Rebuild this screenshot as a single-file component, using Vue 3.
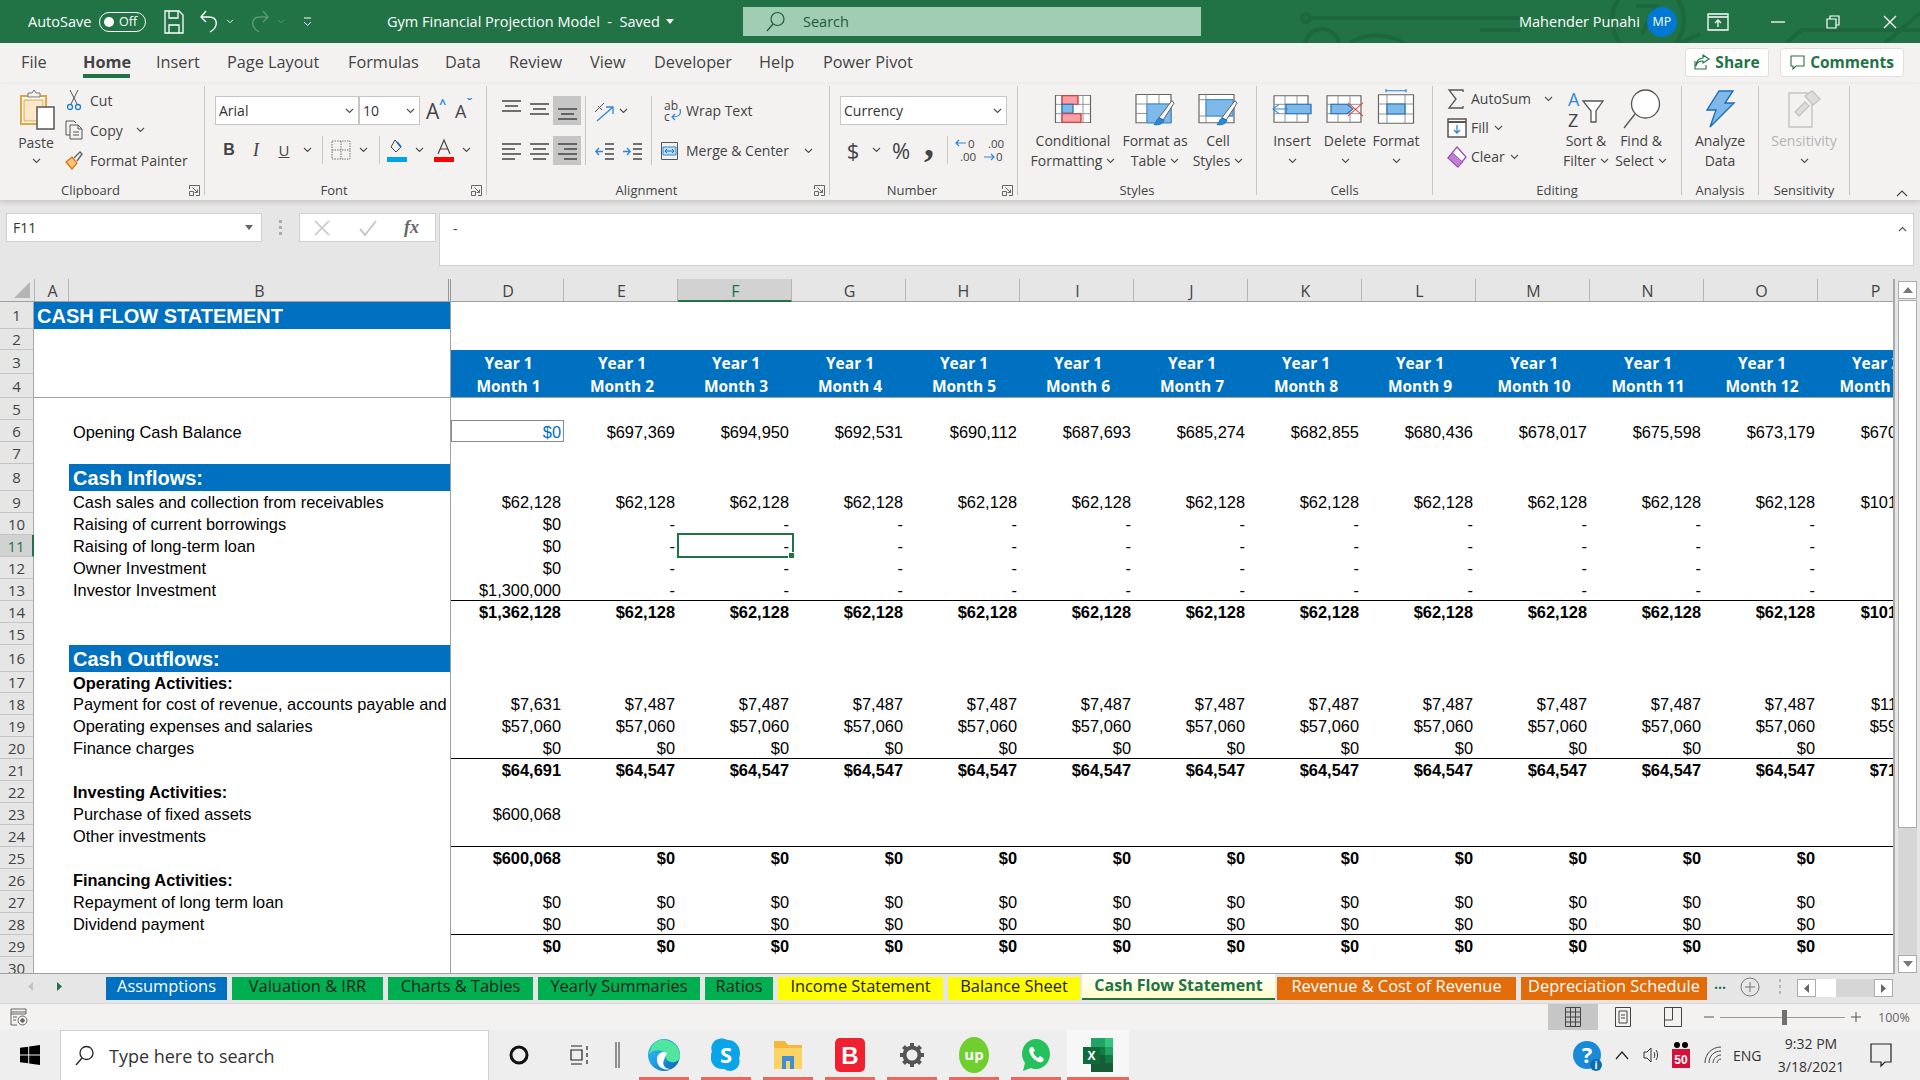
<template>
  <div class="app">
    <svg class="defs" width="0" height="0" aria-hidden="true">
      <symbol id="cv" viewBox="0 0 9 6"><path d="M1 1l3.500 3.500L8 1" fill="none" stroke="#505050" stroke-width="1.1"/></symbol>
      <symbol id="launch" viewBox="0 0 11 11"><path d="M.5 4V.5h10v10H7M.5 6.500v4h4v-4zM3.500 2.500l5 5M8.500 4.500v3h-3" fill="none" stroke="#666" stroke-width="1"/></symbol>
    </svg>

    <header class="titlebar">
      <svg class="circuit" viewBox="0 0 1920 43" width="1920" height="43" fill="none" stroke="#1c673d" stroke-width="4">
        <circle cx="1306" cy="18" r="4"/><path d="M1310 18h210"/><circle cx="1322" cy="46" r="17"/>
        <path d="M1350 43c20-14 50-6 58 4"/><circle cx="1648" cy="20" r="36"/><path d="M1636 6h20l-14 28"/>
        <path d="M1786 43l16-13h118M1885 43l35-30M1700 34l-20 9M1480 30h40"/>
      </svg>
      <span class="autosave">AutoSave</span>
      <span class="toggle"><i></i>Off</span>
      <svg class="t-save" width="20" height="26" viewBox="0 0 20 26" fill="none" stroke="#fff" stroke-width="1.300"><path d="M1 2h14l4 4v18H1zM5 2v7h9V2M5 24v-8h10v8"/></svg>
      <svg class="t-undo" width="18" height="26" viewBox="0 0 18 26" fill="none" stroke="#fff" stroke-width="1.400"><path d="M6 2L1 8l5 5M1 8h8c9 0 10 10 1 15"/></svg>
      <svg class="cvw t-c1" viewBox="0 0 9 6"><path d="M1 1l3.500 3.500L8 1" fill="none" stroke="#fff" stroke-width="1.100"/></svg>
      <svg class="t-redo" width="18" height="26" viewBox="0 0 18 26" fill="none" stroke="#5c9a78" stroke-width="1.400"><path d="M12 2l5 6-5 5M17 8H9C0 8-1 18 8 23"/></svg>
      <svg class="cvw t-c2" viewBox="0 0 9 6"><path d="M1 1l3.500 3.500L8 1" fill="none" stroke="#5c9a78" stroke-width="1.100"/></svg>
      <svg class="t-qat" width="9" height="10" viewBox="0 0 9 10" fill="none" stroke="#fff"><path d="M1 1h7M1 5l3.500 3.500L8 5"/></svg>
      <span class="doc">Gym Financial Projection Model &nbsp;-&nbsp; Saved</span>
      <svg class="t-doc" width="8" height="5" viewBox="0 0 8 5"><path d="M0 0h8L4 5z" fill="#fff"/></svg>
      <div class="search">
        <svg width="19" height="22" viewBox="0 0 19 22" fill="none" stroke="#1d5a38" stroke-width="1.200"><circle cx="11.500" cy="8" r="6.500"/><path d="M7 13L1 20"/></svg>
        <span>Search</span>
      </div>
      <span class="user">Mahender Punahi</span>
      <span class="avatar">MP</span>
      <svg class="t-disp" width="22" height="18" viewBox="0 0 22 18" fill="none" stroke="#fff" stroke-width="1.300"><path d="M1 1h20v16H1zM1 4h20M11 14V7M8 10l3-3 3 3"/></svg>
      <svg class="t-min" width="14" height="2" viewBox="0 0 14 2"><path d="M0 1h14" stroke="#fff" stroke-width="1.300"/></svg>
      <svg class="t-res" width="14" height="14" viewBox="0 0 14 14" fill="none" stroke="#fff" stroke-width="1.200"><path d="M1 4h9v9H1zM4 4V1h9v9h-3"/></svg>
      <svg class="t-close" width="14" height="14" viewBox="0 0 14 14" fill="none" stroke="#fff" stroke-width="1.300"><path d="M1 1l12 12M13 1L1 13"/></svg>
    </header>

    <nav class="tabs">
      <span v-for="t in ribbonTabs" :key="t" :class="{ on: t === 'Home' }">{{ t }}</span>
      <button class="pill share">
        <svg width="16" height="16" viewBox="0 0 16 16" fill="none" stroke="#217346" stroke-width="1.100"><path d="M1 7v8h11v-4M9 1l6 4-6 4V7C6 7 3 8 2 12c0-6 4-8 7-8z"/></svg>Share
      </button>
      <button class="pill comments">
        <svg width="15" height="15" viewBox="0 0 15 15" fill="none" stroke="#217346" stroke-width="1.100"><path d="M1 1h13v10H6l-3 3v-3H1z"/></svg>Comments
      </button>
    </nav>

    <section class="ribbon">
      <div class="grp g-clip">
        <div class="body clip">
          <div class="paste">
            <svg class="pasteico" width="36" height="42" viewBox="0 0 36 42" fill="none">
              <path d="M1 7h25v28H1z" fill="#fff" stroke="#e8a33d" stroke-width="2"/>
              <path d="M4 11h19v21H4z" fill="#fde9c9" stroke="#e8a33d"/>
              <path d="M8 8V4h4l2-3 2 3h4v4z" fill="#f3f2f1" stroke="#777"/>
              <path d="M17 18h17v22H17z" fill="#fff" stroke="#555" stroke-width="1.500"/>
            </svg>
            <span>Paste</span>
            <svg class="cv"><use href="#cv"/></svg>
          </div>
          <div class="clipcol">
            <div class="mini">
              <svg width="18" height="22" viewBox="0 0 18 22" fill="none"><path d="M5 1l7 14M13 1L6 15" stroke="#555"/><circle cx="5" cy="18" r="2.500" stroke="#1e7fc9" stroke-width="1.300"/><circle cx="13" cy="18" r="2.500" stroke="#1e7fc9" stroke-width="1.300"/></svg>
              <span>Cut</span>
            </div>
            <div class="mini">
              <svg width="18" height="20" viewBox="0 0 18 20" fill="none" stroke="#555"><path d="M5 15H1V1h8l2 2M5 5h8l4 4v10H5zM13 5v4h4M8 12h6M8 15h6"/></svg>
              <span>Copy</span>
              <svg class="cv copycv"><use href="#cv"/></svg>
            </div>
            <div class="mini">
              <svg width="18" height="20" viewBox="0 0 18 20" fill="none"><path d="M1 12l6-5 5 6-5 6z" fill="#f8c27a" stroke="#d9730d" stroke-width="1.200"/><path d="M9 8l6-6 2 2-5 7" stroke="#666" stroke-width="1.400"/></svg>
              <span>Format Painter</span>
            </div>
          </div>
        </div>
        <div class="lbl"><span>Clipboard</span><svg class="launch"><use href="#launch"/></svg></div>
      </div>
      <i class="sep"></i>

      <div class="grp g-font">
        <div class="body font">
          <div class="combos">
            <div class="combo c-font"><span>Arial</span><svg class="cv"><use href="#cv"/></svg></div>
            <div class="combo c-size"><span>10</span><svg class="cv"><use href="#cv"/></svg></div>
            <span class="grow"><b>A</b><sup>^</sup></span>
            <span class="shrink"><b>A</b><sup>ˇ</sup></span>
          </div>
          <div class="fontrow">
            <span class="fb">B</span><span class="fi">I</span><span class="fu">U</span>
            <svg class="cv"><use href="#cv"/></svg><i class="vsep"></i>
            <svg width="20" height="20" viewBox="0 0 20 20" fill="none" stroke="#777" stroke-dasharray="1.500 1"><path d="M1 1h18v18H1zM10 1v18M1 10h18"/></svg>
            <svg class="cv"><use href="#cv"/></svg><i class="vsep"></i>
            <svg width="20" height="24" viewBox="0 0 20 24" fill="none"><path d="M8 2l6 7-5 5-5-5z" stroke="#444"/><path d="M10 4l4 5" stroke="#1a6fb5" stroke-width="2"/><path d="M0 19h20v5H0z" fill="#00a2e8"/></svg>
            <svg class="cv"><use href="#cv"/></svg>
            <svg width="20" height="24" viewBox="0 0 20 24" fill="none"><path d="M4 16L10 2l6 14M6 11h8" stroke="#444" stroke-width="1.200"/><path d="M0 19h20v5H0z" fill="#f00"/></svg>
            <svg class="cv"><use href="#cv"/></svg>
          </div>
        </div>
        <div class="lbl"><span>Font</span><svg class="launch"><use href="#launch"/></svg></div>
      </div>
      <i class="sep"></i>

      <div class="grp g-align">
        <div class="body align">
          <div class="aligngrid">
            <span class="ab"><svg width="19" height="29"><path d="M0 5h19M3 10h13M0 15h19" stroke="#444" stroke-width="1.300"/></svg></span>
            <span class="ab"><svg width="19" height="29"><path d="M0 8h19M3 13h13M0 18h19" stroke="#444" stroke-width="1.300"/></svg></span>
            <span class="ab act"><svg width="19" height="29"><path d="M0 13h19M3 18h13M0 23h19" stroke="#444" stroke-width="1.300"/></svg></span>
            <i class="vsep tall"></i>
            <span class="ab"><svg width="20" height="22" viewBox="0 0 20 22" fill="none"><path d="M1 12l9-9M4 6l4 4" stroke="#555"/><path d="M3 21L19 7M12 7h7v7" stroke="#2b88d8" stroke-width="1.300"/></svg></span>
            <svg class="cv orient"><use href="#cv"/></svg>
            <i class="vsep tall"></i>
            <span class="wrap">
              <svg class="wrapi" width="17" height="22" viewBox="0 0 17 22" fill="none"><text x="0" y="10" class="ic-t">ab</text><text x="0" y="21" class="ic-t">c</text><path d="M16 9c2 7-3 8-8 8M11 14l-3 3 3 3" stroke="#2b88d8" stroke-width="1.200"/></svg>
              <span>Wrap Text</span>
            </span>
            <span class="ab"><svg width="19" height="18"><path d="M0 2h19M0 7h13M0 12h19M0 17h13" stroke="#444" stroke-width="1.400"/></svg></span>
            <span class="ab"><svg width="19" height="18"><path d="M0 2h19M3 7h13M0 12h19M3 17h13" stroke="#444" stroke-width="1.400"/></svg></span>
            <span class="ab act"><svg width="19" height="18"><path d="M0 2h19M6 7h13M0 12h19M6 17h13" stroke="#444" stroke-width="1.400"/></svg></span>
            <span class="ab"><svg width="19" height="18" fill="none"><path d="M10 2h9M10 7h9M10 12h9M10 17h9" stroke="#444" stroke-width="1.300"/><path d="M8 9.500H1M4 6L.8 9.500 4 13" stroke="#2b88d8" stroke-width="1.300"/></svg></span>
            <span class="ab"><svg width="19" height="18" fill="none"><path d="M10 2h9M10 7h9M10 12h9M10 17h9" stroke="#444" stroke-width="1.300"/><path d="M0 9.500h7M4 6l3.200 3.500L4 13" stroke="#2b88d8" stroke-width="1.300"/></svg></span>
            <span class="wrap merge">
              <svg width="17" height="18" viewBox="0 0 17 18" fill="none"><path d="M.5.500h16v17H.5z" stroke="#555"/><path d="M2 5h13v8H2z" fill="#bfe0f7" stroke="#2b88d8"/><path d="M4 9h9M6 7L4 9l2 2M11 7l2 2-2 2" stroke="#1a6fb5"/></svg>
              <span>Merge &amp; Center</span>
              <svg class="cv mergecv"><use href="#cv"/></svg>
            </span>
          </div>
        </div>
        <div class="lbl"><span>Alignment</span><svg class="launch"><use href="#launch"/></svg></div>
      </div>
      <i class="sep"></i>

      <div class="grp g-num">
        <div class="body num">
          <div class="combo c-cur"><span>Currency</span><svg class="cv"><use href="#cv"/></svg></div>
          <div class="numrow">
            <span class="sym">$</span>
            <svg class="cv"><use href="#cv"/></svg>
            <span class="sym">%</span>
            <span class="sym comma">,</span>
            <i class="vsep"></i>
            <svg width="22" height="26" viewBox="0 0 22 26" fill="none"><text x="13" y="11" class="ic-n">0</text><text x="5" y="24" class="ic-n">.00</text><path d="M11 6H1M4 3L1 6l3 3" stroke="#2b88d8" stroke-width="1.200"/></svg>
            <svg width="22" height="26" viewBox="0 0 22 26" fill="none"><text x="5" y="11" class="ic-n">.00</text><text x="13" y="24" class="ic-n">0</text><path d="M1 20h10M8 17l3 3-3 3" stroke="#2b88d8" stroke-width="1.200"/></svg>
          </div>
        </div>
        <div class="lbl"><span>Number</span><svg class="launch"><use href="#launch"/></svg></div>
      </div>
      <i class="sep"></i>

      <div class="grp g-styles">
        <div class="body bigs">
          <div class="big w80">
            <div class="ico"><svg class="flat" width="36" height="28" viewBox="0 0 36 36" preserveAspectRatio="none" fill="none"><path d="M.5.500h35v35H.5z" fill="#fff" stroke="#666" stroke-width="1.200"/><path d="M7 .5v35M28 .5v35M.5 12h35M.5 24h35" stroke="#888"/><path d="M7 1h16v11H7z" fill="#f8a0a6" stroke="#d13438" stroke-width="1.300"/><path d="M7 12h11v11H7z" fill="#7fb9ea" stroke="#1a6fb5" stroke-width="1.200"/><path d="M7 24h19v11H7z" fill="#f8a0a6" stroke="#d13438" stroke-width="1.300"/></svg></div>
            <span>Conditional</span><span class="cvt">Formatting<svg class="cv"><use href="#cv"/></svg></span>
          </div>
          <div class="big w84">
            <div class="ico"><svg class="sty" width="40" height="36" viewBox="0 0 40 42" preserveAspectRatio="none" fill="none"><path d="M1 3h35v33H1z" fill="#fff" stroke="#666" stroke-width="1.200"/><path d="M12 3v33M24 3v33M1 14h35M1 25h35" stroke="#888"/><path d="M12 14h24v22H12z" fill="#7fb9ea" stroke="#2b88d8"/><path d="M37 10L24 30l4 3L39 13z" fill="#fff" stroke="#555"/><path d="M24 30c-3 2-2 5-5 8 5 1 9-1 10-5z" fill="#2b88d8" stroke="#1a6fb5"/></svg></div>
            <span>Format as</span><span class="cvt">Table<svg class="cv"><use href="#cv"/></svg></span>
          </div>
          <div class="big w42">
            <div class="ico"><svg class="sty" width="40" height="36" viewBox="0 0 40 42" preserveAspectRatio="none" fill="none"><path d="M1 3h35v33H1z" fill="#fff" stroke="#666" stroke-width="1.200"/><path d="M1 9h35M8 3v33M1 28h35" stroke="#888"/><path d="M8 9h27v19H8z" fill="#7fb9ea" stroke="#2b88d8"/><path d="M37 10L24 30l4 3L39 13z" fill="#fff" stroke="#555"/><path d="M24 30c-3 2-2 5-5 8 5 1 9-1 10-5z" fill="#2b88d8" stroke="#1a6fb5"/></svg></div>
            <span>Cell</span><span class="cvt">Styles<svg class="cv"><use href="#cv"/></svg></span>
          </div>
        </div>
        <div class="lbl plain"><span>Styles</span></div>
      </div>
      <i class="sep"></i>

      <div class="grp g-cells">
        <div class="body bigs">
          <div class="big w50">
            <div class="ico"><svg width="40" height="28" viewBox="0 0 40 36" preserveAspectRatio="none" fill="none"><path d="M2 1h34v34H2z" fill="#fff" stroke="#666" stroke-width="1.200"/><path d="M13 1v34M25 1v34M2 12h34M2 24h34" stroke="#888"/><path d="M14 12h25v12H14z" fill="#7fb9ea" stroke="#1a6fb5" stroke-width="1.200"/><path d="M16 18H1M7 12l-6 6 6 6" stroke="#2b88d8" stroke-width="1.200" fill="#fff"/></svg></div>
            <span>Insert</span><svg class="cv alone"><use href="#cv"/></svg>
          </div>
          <div class="big w56">
            <div class="ico"><svg width="38" height="28" viewBox="0 0 38 36" preserveAspectRatio="none" fill="none"><path d="M1 1h34v34H1z" fill="#fff" stroke="#666" stroke-width="1.200"/><path d="M12 1v34M24 1v34M1 12h34M1 24h34" stroke="#888"/><path d="M5 12h16l6 6-6 6H5z" fill="#7fb9ea" stroke="#1a6fb5" stroke-width="1.200"/><path d="M22 10l15 17M37 10L22 27" stroke="#e8423c" stroke-width="1.300"/></svg></div>
            <span>Delete</span><svg class="cv alone"><use href="#cv"/></svg>
          </div>
          <div class="big w46">
            <div class="ico"><svg class="capd" width="36" height="35" viewBox="0 0 36 42" preserveAspectRatio="none" fill="none"><path d="M.5 7h35v34H.5z" fill="#fff" stroke="#666" stroke-width="1.200"/><path d="M9 7v34M27 7v34M.5 18h35M.5 30h35" stroke="#888"/><path d="M9 18h18v12H9z" fill="#7fb9ea" stroke="#1a6fb5" stroke-width="1.200"/><path d="M8 2h20M8 0v4M28 0v4" stroke="#2b88d8" stroke-width="1.200"/></svg></div>
            <span>Format</span><svg class="cv alone"><use href="#cv"/></svg>
          </div>
        </div>
        <div class="lbl plain"><span>Cells</span></div>
      </div>
      <i class="sep"></i>

      <div class="grp g-edit">
        <div class="body edit">
          <div class="editcol">
            <div class="mini e"><svg width="20" height="20" viewBox="0 0 20 20" fill="none"><path d="M16 3V1H2l7 9-7 9h14v-2" stroke="#555" stroke-width="1.300"/></svg><span>AutoSum</span><svg class="cv acv"><use href="#cv"/></svg></div>
            <div class="mini e"><svg width="20" height="20" viewBox="0 0 20 20" fill="none"><path d="M1 1h18v18H1z" fill="#fff" stroke="#555" stroke-width="1.500"/><path d="M1 4h18" stroke="#555" stroke-width="2"/><path d="M10 7v8M7 12l3 3 3-3" stroke="#2b88d8" stroke-width="1.300"/></svg><span>Fill</span><svg class="cv"><use href="#cv"/></svg></div>
            <div class="mini e"><svg width="20" height="22" viewBox="0 0 20 22" fill="none"><path d="M10 1l9 10-8 10-10-9z" fill="#fff" stroke="#9b4db5" stroke-width="1.300"/><path d="M5.500 7l10 9-4.500 5-10-9z" fill="#c27ed6" stroke="#9b4db5"/></svg><span>Clear</span><svg class="cv"><use href="#cv"/></svg></div>
          </div>
          <div class="big w52">
            <div class="ico"><svg width="37" height="40" viewBox="0 0 37 40" fill="none"><text x="0" y="17" class="ic-a">A</text><text x="0" y="38" class="ic-z">Z</text><path d="M15 12h20l-7 10v11h-5V22z" fill="#fff" stroke="#555" stroke-width="1.300"/></svg></div>
            <span>Sort &amp;</span><span class="cvt">Filter<svg class="cv"><use href="#cv"/></svg></span>
          </div>
          <div class="big w58">
            <div class="ico"><svg width="37" height="42" viewBox="0 0 37 42" fill="none" stroke="#555" stroke-width="1.300"><circle cx="22.500" cy="16" r="14" fill="#fff"/><path d="M12 26L1 40"/></svg></div>
            <span>Find &amp;</span><span class="cvt">Select<svg class="cv"><use href="#cv"/></svg></span>
          </div>
        </div>
        <div class="lbl plain"><span>Editing</span></div>
      </div>
      <i class="sep"></i>

      <div class="grp g-an">
        <div class="body bigs">
          <div class="big wf">
            <div class="ico"><svg width="28" height="38" viewBox="0 0 28 38" fill="none"><path d="M13 1h14L19 13h9L4 37l6-17H1z" fill="#7fb9ea" stroke="#1a6fb5" stroke-width="1.400"/></svg></div>
            <span>Analyze</span><span>Data</span>
          </div>
        </div>
        <div class="lbl plain"><span>Analysis</span></div>
      </div>
      <i class="sep"></i>

      <div class="grp g-sens">
        <div class="body bigs">
          <div class="big wf dim">
            <div class="ico"><svg width="34" height="38" viewBox="0 0 34 38" fill="none" stroke="#c4c4c4" stroke-width="1.400"><path d="M2 3h23v34H2z"/><path d="M8 22l10-10 4 4-10 10z" fill="#ddd"/><path d="M18 6l7-5 8 8-7 6z" fill="#ddd"/></svg></div>
            <span>Sensitivity</span><svg class="cv alone"><use href="#cv"/></svg>
          </div>
        </div>
        <div class="lbl plain"><span>Sensitivity</span></div>
      </div>
      <i class="sep"></i>
      <svg class="collapse" width="12" height="7" viewBox="0 0 12 7" fill="none"><path d="M1 6l5-5 5 5" stroke="#444" stroke-width="1.100"/></svg>
    </section>

    <section class="formula">
      <div class="namebox"><span>F11</span><svg width="8" height="5" viewBox="0 0 8 5"><path d="M0 0h8L4 5z" fill="#666"/></svg></div>
      <div class="dots"><i></i><i></i><i></i></div>
      <div class="fxbox">
        <svg width="16" height="16" viewBox="0 0 16 16"><path d="M1 1l14 14M15 1L1 15" stroke="#c8c8c8" stroke-width="1.700"/></svg>
        <svg width="18" height="16" viewBox="0 0 18 16" fill="none"><path d="M1 9l5 6L17 1" stroke="#c8c8c8" stroke-width="2"/></svg>
        <span class="fx">fx</span>
      </div>
      <div class="finput"><span>-</span><svg width="9" height="6" viewBox="0 0 9 6" fill="none"><path d="M1 5l3.500-3.500L8 5" stroke="#555" stroke-width="1.200"/></svg></div>
    </section>

    <section class="sheetwrap">
      <div class="sheet">
        <div class="colhead">
          <div class="corner"><svg width="16" height="16" viewBox="0 0 16 16"><path d="M16 0v16H0z" fill="#b5b5b5"/></svg></div>
          <div v-for="c in cols" :key="c.k" class="ch" :class="[c.cls, { sel: c.k === 'F' }]">{{ c.k }}</div>
        </div>
        <div v-for="r in rows" :key="r.n" class="row" :class="[r.cls]" :style="{ height: r.h + 'px' }">
          <div class="rh" :class="{ sel: r.n === 11 }">{{ r.n }}</div>
          <template v-if="r.title">
            <div class="title">{{ r.title }}</div>
          </template>
          <template v-else>
            <div class="a"></div>
            <div class="b" :class="r.bcls">{{ r.b }}</div>
          </template>
          <div v-for="(v, i) in r.cells" :key="i" class="c" :class="[i === 0 ? 'first' : '', r.n === 11 && i === 2 ? 'cur' : '', r.n === 6 && i === 0 ? 'd6' : '']">{{ v }}</div>
        </div>
      </div>
      <div class="vscroll">
        <div class="sbtn"><svg width="10" height="6" viewBox="0 0 10 6"><path d="M5 0l5 6H0z" fill="#777"/></svg></div>
        <div class="thumb"></div>
        <div class="track"></div>
        <div class="sbtn"><svg width="10" height="6" viewBox="0 0 10 6"><path d="M0 0h10L5 6z" fill="#777"/></svg></div>
      </div>
    </section>

    <section class="sheettabs">
      <div class="nav">
        <svg width="5" height="9" viewBox="0 0 5 9"><path d="M5 0v9L0 4.500z" fill="#c4c4c4"/></svg>
        <svg width="5" height="9" viewBox="0 0 5 9"><path d="M0 0v9l5-4.500z" fill="#217346"/></svg>
      </div>
      <div class="stabs">
        <div v-for="t in sheetTabs" :key="t.n" class="st" :class="t.c">{{ t.n }}</div>
      </div>
      <span class="more">...</span>
      <svg class="plus" width="20" height="20" viewBox="0 0 20 20" fill="none" stroke="#777"><circle cx="10" cy="10" r="9"/><path d="M10 5v10M5 10h10"/></svg>
      <div class="dots dk"><i></i><i></i><i></i></div>
      <div class="hscroll">
        <span class="hb"><svg width="5" height="9" viewBox="0 0 5 9"><path d="M5 0v9L0 4.500z" fill="#666"/></svg></span>
        <span class="hthumb"></span>
        <span class="htrack"></span>
        <span class="hb"><svg width="5" height="9" viewBox="0 0 5 9"><path d="M0 0v9l5-4.500z" fill="#666"/></svg></span>
      </div>
    </section>

    <footer class="status">
      <svg class="macro" width="18" height="18" viewBox="0 0 18 18" fill="none" stroke="#666"><path d="M1 1h15v5H1zM1 4h15M1 6v11h6M3 9h4M3 12h3"/><circle cx="12.500" cy="12.500" r="4.500"/><circle cx="12.500" cy="12.500" r="1.800" fill="#666"/></svg>
      <div class="views">
        <span class="vw act"><svg width="16" height="20" viewBox="0 0 16 20" fill="none" stroke="#444"><path d="M.5.500h15v19H.5zM5.500.5v19M10.500.5v19M.5 5h15M.5 10h15M.5 15h15"/></svg></span>
        <span class="vw"><svg width="16" height="20" viewBox="0 0 16 20" fill="none" stroke="#444"><path d="M.5.500h15v19H.5z"/><path d="M4 4h8v12H4zM6 8h4M6 11h4"/></svg></span>
        <span class="vw"><svg width="18" height="20" viewBox="0 0 18 20" fill="none" stroke="#444"><path d="M.5.500h17v19H.5zM.5 13h8V.5"/></svg></span>
      </div>
      <div class="zoom">
        <svg width="10" height="2" viewBox="0 0 10 2"><path d="M0 1h10" stroke="#555"/></svg>
        <span class="slider"><i></i></span>
        <svg width="10" height="10" viewBox="0 0 10 10"><path d="M0 5h10M5 0v10" stroke="#555"/></svg>
        <span class="pct">100%</span>
      </div>
    </footer>

    <footer class="taskbar">
      <svg class="win" width="20" height="20" viewBox="0 0 20 20"><path d="M0 2.800L8.200 1.700V9.500H0zM9.200 1.500L20 0v9.500H9.200zM0 10.500h8.200v7.800L0 17.200zM9.200 10.500H20V20L9.200 18.500z" fill="#000"/></svg>
      <div class="tsearch">
        <svg width="19" height="22" viewBox="0 0 19 22" fill="none" stroke="#222" stroke-width="1.300"><circle cx="11.500" cy="8" r="6.500"/><path d="M7 13L1 20"/></svg>
        <span>Type here to search</span>
      </div>
      <svg class="cort" width="20" height="20" viewBox="0 0 20 20" fill="none"><circle cx="10" cy="10" r="8" stroke="#111" stroke-width="3"/></svg>
      <svg class="tview" width="20" height="20" viewBox="0 0 20 20" fill="none" stroke="#222" stroke-width="1.200"><path d="M1 1h11M1 19h11M1 5h11v10H1zM17 1v4M17 8v4M17 15v4"/></svg>
      <svg class="bars" width="5" height="26" viewBox="0 0 5 26" stroke="#333"><path d="M1 0v26M4 0v26"/></svg>
      <div class="apps">
        <div class="app-i">
          <svg width="34" height="34" viewBox="0 0 34 34"><defs><linearGradient id="eg" x1="0" y1="0" x2="1" y2="1"><stop offset="0" stop-color="#35c1f1"/><stop offset=".5" stop-color="#1b9de2"/><stop offset="1" stop-color="#0c59a4"/></linearGradient></defs><circle cx="17" cy="17" r="16" fill="url(#eg)"/><path d="M10 3c10-4 23 3 23 15 0 5-5 7-9 6-4-1-5-3-5-5 0-6-9-10-17-3 2-6 4-11 8-13z" fill="#50e6a0"/><path d="M20 15c-5-3-11 1-10 8 1 7 8 10 14 8 -7 0-9-5-7-9z" fill="#fff"/></svg>
        </div>
        <div class="app-i">
          <svg width="30" height="34" viewBox="0 0 30 34"><path d="M8 1c3-1 6 0 9 1 7 0 12 6 12 13 0 2 0 3-1 5 2 5-1 12-8 13-3 0-5-1-7-2-8 1-14-5-13-13 0-2 0-3 1-4C-1 8 2 2 8 1z" fill="#0aa5e8"/><text x="15" y="25" class="ic-s">S</text></svg>
        </div>
        <div class="app-i">
          <svg width="30" height="30" viewBox="0 0 30 30"><path d="M1 1h11l3 4h14v5H1z" fill="#f6b73c"/><path d="M1 8h28v21H1z" fill="#fcd465"/><path d="M9 29V16h12v13h-4v-8h-4v8z" fill="#3a8fd8"/></svg>
        </div>
        <div class="app-i">
          <svg width="30" height="34" viewBox="0 0 30 34"><rect width="30" height="34" rx="5" fill="#ef2030"/><text x="15" y="26" class="ic-b">B</text></svg>
        </div>
        <div class="app-i">
          <svg width="26" height="26" viewBox="0 0 26 26" fill="none"><circle cx="13" cy="13" r="7.500" stroke="#555" stroke-width="4"/><path d="M13 1v5M13 20v5M1 13h5M20 13h5M4.500 4.500l3.500 3.500M18 18l3.500 3.500M21.500 4.500L18 8M8 18l-3.500 3.500" stroke="#555" stroke-width="4"/></svg>
        </div>
        <div class="app-i">
          <svg width="30" height="36" viewBox="0 0 30 36"><ellipse cx="15" cy="18" rx="15" ry="18" fill="#6fcf2f"/><text x="15" y="23" class="ic-u">up</text></svg>
        </div>
        <div class="app-i">
          <svg width="30" height="34" viewBox="0 0 30 34"><path d="M15 1C7 1 1 8 1 16c0 3 1 6 3 9L2 33l8-3c2 1 3 1 5 1 8 0 14-7 14-15S23 1 15 1z" fill="#25c15c"/><path d="M10 9c-3 2-2 6 1 10 3 4 7 6 10 5 2-1 2-3 1-4l-3-2-2 2c-2-1-4-3-5-6l2-1-2-4z" fill="#fff"/></svg>
        </div>
        <div class="app-i x">
          <svg width="30" height="34" viewBox="0 0 30 34"><path d="M8 0h14v9H8z" fill="#21a366"/><path d="M22 0h8v9h-8z" fill="#33c481"/><path d="M8 9h14v8H8z" fill="#107c41"/><path d="M22 9h8v8h-8z" fill="#21a366"/><path d="M8 17h14v8H8z" fill="#185c37"/><path d="M22 17h8v8h-8z" fill="#107c41"/><path d="M8 25h22v9H8z" fill="#185c37"/><path d="M0 9h17v17H0z" fill="#0f6b3a"/><text x="8.500" y="22" class="ic-x">X</text></svg>
        </div>
      </div>
      <div class="tray">
        <svg class="t1" width="30" height="38" viewBox="0 0 30 38"><circle cx="14" cy="19" r="14" fill="#1a8ad8"/><text x="14" y="27" class="ic-q">?</text><circle cx="23" cy="29" r="6" fill="#0c6cb0"/><text x="23" y="33" class="ic-i">i</text></svg>
        <svg class="t2" width="14" height="9" viewBox="0 0 14 9" fill="none"><path d="M1 8l6-7 6 7" stroke="#222" stroke-width="1.200"/></svg>
        <svg class="t3" width="16" height="16" viewBox="0 0 16 16" fill="none" stroke="#333"><path d="M1 5h3l4-4v14l-4-4H1zM11 5c1 2 1 4 0 6M13 3c2 3 2 7 0 10"/></svg>
        <svg class="t4" width="18" height="26" viewBox="0 0 18 26"><circle cx="5" cy="3" r="3"/><circle cx="13" cy="3" r="3"/><rect y="7" width="18" height="19" fill="#d6103a"/><text x="9" y="22" class="ic-50">50</text></svg>
        <svg class="t5" width="18" height="18" viewBox="0 0 18 18" fill="none" stroke="#444"><path d="M1 17C1 8 8 1 17 1M5 17c0-7 5-12 12-12M9 17c0-4 4-8 8-8M13 17c0-2 2-4 4-4"/></svg>
        <span class="eng">ENG</span>
        <div class="clock"><span>9:32 PM</span><span>3/18/2021</span></div>
        <svg class="t6" width="22" height="24" viewBox="0 0 22 24" fill="none" stroke="#222" stroke-width="1.200"><path d="M1 1h20v18h-6l-4 4v-4H1z"/></svg>
      </div>
    </footer>
  </div>
</template>

<script setup>
const ribbonTabs = ['File', 'Home', 'Insert', 'Page Layout', 'Formulas', 'Data', 'Review', 'View', 'Developer', 'Help', 'Power Pivot']

const letters = ['D', 'E', 'F', 'G', 'H', 'I', 'J', 'K', 'L', 'M', 'N', 'O', 'P']
const cols = [{ k: 'A', cls: 'ca' }, { k: 'B', cls: 'cb' }, ...letters.map((k, i) => ({ k, cls: i === 0 ? 'cd' : 'cx' }))]

const same = (first, rest, last = '') => [first, ...Array(11).fill(rest), last]
const empty = Array(13).fill('')
const months = Array.from({ length: 13 }, (_, i) => 'Month ' + (i + 1))
const years = [...Array(12).fill('Year 1'), 'Year 2']
const balances = ['$0', '$697,369', '$694,950', '$692,531', '$690,112', '$687,693', '$685,274', '$682,855', '$680,436', '$678,017', '$675,598', '$673,179', '$670,760']

const row = (n, h, b = '', cells = empty, cls = '', bcls = '') => ({ n, h, b, cells, cls, bcls })
const rows = [
  { ...row(1, 27), title: 'CASH FLOW STATEMENT' },
  row(2, 21),
  row(3, 24, '', years, 'head'),
  row(4, 24, '', months, 'head last'),
  row(5, 22),
  row(6, 22, 'Opening Cash Balance', balances, 'low'),
  row(7, 22),
  row(8, 27, 'Cash Inflows:', empty, '', 'sec'),
  row(9, 22, 'Cash sales and collection from receivables', same('$62,128', '$62,128', '$101,267')),
  row(10, 22, 'Raising of current borrowings', same('$0', '-')),
  row(11, 22, 'Raising of long-term loan', same('$0', '-')),
  row(12, 22, 'Owner Investment', same('$0', '-')),
  row(13, 22, 'Investor Investment', same('$1,300,000', '-'), 'line'),
  row(14, 22, '', same('$1,362,128', '$62,128', '$101,267'), 'bold'),
  row(15, 22),
  row(16, 27, 'Cash Outflows:', empty, '', 'sec'),
  row(17, 21, 'Operating Activities:', empty, '', 'bb'),
  row(18, 22, 'Payment for cost of revenue, accounts payable and', same('$7,631', '$7,487', '$11,931')),
  row(19, 22, 'Operating expenses and salaries', same('$57,060', '$57,060', '$59,913')),
  row(20, 22, 'Finance charges', same('$0', '$0'), 'line'),
  row(21, 22, '', same('$64,691', '$64,547', '$71,844'), 'bold'),
  row(22, 22, 'Investing Activities:', empty, '', 'bb'),
  row(23, 22, 'Purchase of fixed assets', same('$600,068', '')),
  row(24, 22, 'Other investments', empty, 'line'),
  row(25, 22, '', same('$600,068', '$0'), 'bold'),
  row(26, 22, 'Financing Activities:', empty, '', 'bb'),
  row(27, 22, 'Repayment of long term loan', same('$0', '$0')),
  row(28, 22, 'Dividend payment', same('$0', '$0'), 'line'),
  row(29, 22, '', same('$0', '$0'), 'bold'),
  row(30, 22)
]

const sheetTabs = [
  { n: 'Assumptions', c: 'blue' },
  { n: 'Valuation & IRR', c: 'green' },
  { n: 'Charts & Tables', c: 'green' },
  { n: 'Yearly Summaries', c: 'green' },
  { n: 'Ratios', c: 'green' },
  { n: 'Income Statement', c: 'yellow' },
  { n: 'Balance Sheet', c: 'yellow' },
  { n: 'Cash Flow Statement', c: 'active' },
  { n: 'Revenue & Cost of Revenue', c: 'orange' },
  { n: 'Depreciation Schedule', c: 'orange' }
]
</script>

<style>
html, body { margin: 0; padding: 0; background: #fff; }
</style>

<style scoped>
.app { width: 1920px; height: 1080px; overflow: hidden; display: flex; flex-direction: column; font-family: "Open Sans", "Noto Sans", sans-serif; color: #444; font-size: 14px; }
.defs { position: absolute; }
svg { display: block; flex: none; overflow: visible; }

/* title bar */
.titlebar { position: relative; height: 43px; flex: none; background: #217346; display: flex; align-items: center; color: #fff; padding-left: 28px; box-sizing: border-box; }
.circuit { position: absolute; left: 0; top: 0; overflow: hidden; }
.titlebar > *:not(.circuit) { position: relative; }
.autosave { width: 71px; font-size: 14.5px; }
.toggle { width: 47px; height: 20px; box-sizing: border-box; border: 1px solid #fff; border-radius: 10px; display: flex; align-items: center; font-size: 12.500px; gap: 5px; padding-left: 4px; }
.toggle i { width: 10px; height: 10px; border-radius: 50%; background: #fff; }
.t-save { margin-left: 18px; }
.t-undo { margin-left: 16px; }
.cvw { width: 8px; height: 5px; }
.t-c1 { margin-left: 8px; }
.t-redo { margin-left: 17px; }
.t-c2 { margin-left: 8px; }
.t-qat { margin-left: 18px; }
.doc { margin-left: 75px; width: 272px; font-size: 14.5px; white-space: nowrap; }
.t-doc { margin-left: 7px; }
.search { margin-left: 69px; width: 458px; height: 29px; background: #a1cdb4; display: flex; align-items: center; padding-left: 23px; box-sizing: border-box; gap: 18px; color: #1d5a38; font-size: 14.5px; }
.user { margin-left: 318px; width: 128px; font-size: 14.5px; white-space: nowrap; }
.avatar { width: 30px; height: 30px; background: #0078d4; border-radius: 50%; font-size: 12.500px; display: flex; align-items: center; justify-content: center; }
.t-disp { margin-left: 30px; }
.t-min { margin-left: 42px; }
.t-res { margin-left: 41px; }
.t-close { margin-left: 43px; }

/* ribbon tabs */
.tabs { height: 41px; flex: none; background: #f3f2f1; display: grid; grid-template-columns: 62px 73px 71px 121px 97px 64px 81px 64px 105px 64px 862px 95px 124px; padding: 0 0 3px 21px; box-sizing: border-box; align-items: center; font-size: 16.3px; color: #444; white-space: nowrap; }
.tabs .on { font-weight: 700; color: #444; position: relative; width: 47px; }
.tabs .on::after { content: ""; position: absolute; left: 0; right: 0; bottom: -5px; height: 4px; background: #217346; }
.pill { height: 29px; border: 1px solid #e1dfdd; border-radius: 3px; background: #fff; color: #217346; font: 700 15.5px "Open Sans", sans-serif; display: flex; align-items: center; justify-content: center; gap: 5px; padding: 0; }
.share { width: 84px; }
.comments { width: 124px; }

/* ribbon */
.ribbon { height: 116px; flex: none; background: #f3f2f1; display: flex; align-items: flex-start; box-shadow: 0 2px 5px rgba(0, 0, 0, .16); position: relative; z-index: 1; white-space: nowrap; }
.sep { width: 1px; height: 109px; margin-top: 2px; background: #c8c6c4; flex: none; }
.grp { margin-top: 2px; display: flex; flex-direction: column; flex: none; }
.body { height: 95px; }
.lbl { height: 18px; line-height: 18px; font-size: 13px; color: #444; display: flex; align-items: center; padding-right: 4px; }
.lbl span { flex: 1; text-align: center; margin-right: 8px; }
.lbl.plain { padding: 0; }
.lbl.plain span { margin: 0; }
.launch { width: 11px; height: 11px; }
.cv { width: 9px; height: 6px; }
.g-clip { width: 204px; }
.g-font { width: 281px; }
.g-align { width: 342px; }
.g-num { width: 187px; }
.g-styles { width: 238px; }
.g-cells { width: 175px; }
.g-edit { width: 248px; }
.g-an { width: 76px; }
.g-sens { width: 90px; }

.clip { display: flex; }
.paste { width: 38px; margin-left: 17px; display: flex; flex-direction: column; align-items: center; padding-top: 3px; }
.pasteico { margin-left: 4px; }
.paste span { margin-top: 2px; line-height: 20px; font-size: 14px; }
.paste .cv { margin-top: 5px; }
.clipcol { margin-left: 9px; margin-top: -1px; }
.mini { height: 30px; display: flex; align-items: center; font-size: 14px; }
.mini > svg:first-child { width: 20px; margin-right: 6px; }
.copycv { margin-left: 13px; }

.font { padding: 10px 0 0 10px; box-sizing: border-box; }
.combos { display: flex; align-items: center; height: 29px; }
.combo { height: 29px; box-sizing: border-box; border: 1px solid #c8c6c4; background: #fff; display: flex; align-items: center; justify-content: space-between; padding: 0 4px 0 3px; font-size: 14px; color: #333; }
.c-font { width: 144px; }
.c-size { width: 61px; }
.c-cur { width: 167px; }
.grow, .shrink { position: relative; display: flex; color: #444; font-weight: 400; }
.grow { margin-left: 6px; width: 22px; }
.shrink { margin-left: 7px; width: 20px; }
.grow b { font-weight: 400; font-size: 21px; line-height: 24px; }
.shrink b { font-weight: 400; font-size: 18px; line-height: 24px; }
.grow sup, .shrink sup { font-size: 12px; line-height: 12px; color: #2b88d8; margin: -1px 0 0 0; font-weight: 700; }
.fontrow { margin-top: 10px; height: 30px; display: grid; grid-template-columns: 28px 26px 30px 16px 14px 23px 22px 10px 26px 18px 32px 12px; align-items: center; justify-items: center; }
.fb { font-family: "Liberation Sans", sans-serif; font-weight: 700; font-size: 16px; }
.fi { font-family: "Liberation Serif", serif; font-style: italic; font-size: 18px; }
.fu { text-decoration: underline; font-size: 15px; }
.vsep { display: block; width: 1px; height: 28px; background: #c8c6c4; }
.vsep.tall { height: 28px; }

.align { padding: 10px 0 0 11px; box-sizing: border-box; }
.aligngrid { display: grid; grid-template-columns: 27px 28px 28px 8px 30px 26px 12px 180px; grid-template-rows: 29px 29px; row-gap: 11px; align-items: center; justify-items: center; }
.ab { width: 100%; height: 29px; display: flex; align-items: center; justify-content: center; }
.ab.act { background: #c6c6c6; }
.orient { justify-self: start; margin-left: 0; }
.wrap { justify-self: start; display: flex; align-items: center; font-size: 14px; margin-left: 7px; }
.wrap > svg:first-child { margin-right: 5px; }
.merge { margin-left: 4px; }
.merge > svg:first-child { margin-right: 8px; }
.mergecv { margin-left: 15px; }
.aligngrid > .vsep { grid-row: 1 / span 2; height: 69px; align-self: start; grid-column: 7; }
.aligngrid > .vsep:nth-of-type(1) { grid-column: 4; }

.num { padding: 10px 0 0 10px; box-sizing: border-box; }
.numrow { margin-top: 10px; height: 30px; display: grid; grid-template-columns: 26px 20px 30px 26px 10px 28px 28px; align-items: center; justify-items: center; }
.sym { font-size: 22px; line-height: 30px; color: #444; }
.comma { font: 700 40px/0 "Liberation Serif", serif; margin-top: -14px; }

.bigs { display: flex; }
.g-styles .bigs { padding-left: 15px; }
.g-cells .bigs { padding-left: 10px; }
.big { display: flex; flex-direction: column; align-items: center; font-size: 14px; line-height: 20px; flex: none; }
.ico { height: 45px; display: flex; align-items: center; justify-content: center; }
.sty { margin-top: 3px; }
.capd { margin-top: -5px; }
.cvt { display: flex; align-items: center; gap: 4px; }
.cv.alone { margin-top: 7px; }
.w80 { width: 80px; } .w84 { width: 84px; } .w42 { width: 42px; } .w50 { width: 50px; } .w56 { width: 56px; } .w46 { width: 46px; } .w52 { width: 52px; } .w58 { width: 58px; } .wf { width: 100%; }
.g-an .bigs, .g-sens .bigs { width: 100%; }
.dim { color: #b4b4b4; }
.edit { display: flex; padding-left: 14px; box-sizing: border-box; }
.editcol { width: 113px; margin-top: -2px; }
.mini.e { height: 29px; }
.mini.e > svg:first-child { margin-right: 4px; }
.mini.e .cv { margin-left: 5px; }
.mini.e .acv { margin-left: 13px; }
.collapse { margin: 106px 0 0 46px; }

/* formula */
.formula { height: 79px; flex: none; background: #e6e6e6; display: flex; align-items: flex-start; padding-top: 13px; box-sizing: border-box; }
.namebox { margin-left: 6px; width: 256px; height: 29px; box-sizing: border-box; border: 1px solid #d0d0d0; background: #fff; display: flex; align-items: center; justify-content: space-between; padding: 0 8px 0 6px; font-size: 14px; color: #333; }
.dots { width: 37px; height: 29px; display: flex; flex-direction: column; align-items: center; justify-content: center; gap: 3px; }
.dots i { width: 3px; height: 3px; background: #aaa; }
.fxbox { width: 137px; height: 29px; box-sizing: border-box; border: 1px solid #d0d0d0; background: #fff; display: flex; align-items: center; gap: 29px; padding-left: 14px; }
.fx { font: italic 700 18px "Liberation Serif", serif; color: #666; margin-left: -2px; }
.finput { margin-left: 3px; width: 1475px; height: 53px; box-sizing: border-box; border: 1px solid #d0d0d0; background: #fff; display: flex; justify-content: space-between; padding: 5px 6px 0 13px; font-size: 14px; }
.finput svg { margin-top: 7px; }

/* sheet */
.sheetwrap { height: 695px; flex: none; display: flex; background: #e6e6e6; }
.sheet { width: 1893px; flex: none; overflow: hidden; background: #fff; border-right: 2px solid #ababab; border-bottom: 1px solid #a0a0a0; box-sizing: content-box; height: 694px; font-family: "Liberation Sans", Arial, sans-serif; font-size: 16.4px; color: #000; }
.colhead { height: 23px; display: flex; background: #e6e6e6; font-family: "Open Sans", sans-serif; font-size: 16px; color: #444; box-sizing: border-box; border-bottom: 1px solid #a0a0a0; }
.corner { width: 34px; flex: none; display: flex; align-items: flex-end; justify-content: flex-end; box-sizing: border-box; padding: 0 4px 3px 0; }
.ch { flex: none; display: flex; align-items: center; justify-content: center; box-sizing: border-box; border-right: 1px solid #b5b5b5; padding: 2px 0 0 2px; }
.ca { width: 35px; border-left: 1px solid #b5b5b5; }
.cb { width: 382px; border-right: 3px double #999; }
.cd { width: 113px; }
.cx { width: 114px; }
.ch.sel { background: #d2d2d2; color: #217346; border-bottom: 2px solid #217346; height: 23px; }
.row { display: flex; white-space: nowrap; box-sizing: border-box; width: 2000px; }
.rh { width: 34px; flex: none; background: #e6e6e6; box-sizing: border-box; border-bottom: 1px solid #c4c4c4; border-right: 1px solid #a8a8a8; display: flex; align-items: center; justify-content: center; font-family: "Open Sans", sans-serif; font-size: 15px; color: #444; }
.rh.sel { background: #d2d2d2; color: #217346; border-right: 2px solid #217346; }
.title { width: 416px; flex: none; background: #0070c0; color: #fff; font-weight: 700; font-size: 20px; line-height: 28px; padding-left: 3px; box-sizing: border-box; }
.a { width: 35px; flex: none; }
.b { width: 382px; flex: none; box-sizing: border-box; border-right: 1px solid #a0a0a0; padding-left: 4px; overflow: hidden; line-height: 23px; }
.title + .c { border-left: 1px solid #a0a0a0; }
.b.sec { background: #0070c0; color: #fff; font-weight: 700; font-size: 20px; line-height: 28px; padding-left: 4px; background-clip: padding-box; }
.b.bb { font-weight: 700; line-height: 22px; }
.c { width: 114px; flex: none; box-sizing: border-box; text-align: right; padding-right: 3px; line-height: 23px; overflow: hidden; }
.c.first { width: 113px; }
.low .c, .low .b { line-height: 25px; }
.low .c.d6 { border: 1px solid #8a8a8a; color: #0070c0; line-height: 23px; padding-right: 2px; }
.c.cur { position: relative; overflow: visible; }
.c.cur::before { content: ""; position: absolute; left: -1px; top: -2px; right: -2px; bottom: -1px; border: 2px solid #217346; pointer-events: none; }
.c.cur::after { content: ""; position: absolute; right: -3px; bottom: -2px; width: 5px; height: 5px; background: #217346; border: 1px solid #fff; }
.head .c { background: #0070c0; color: #fff; font-family: "Open Sans", sans-serif; font-weight: 700; font-size: 15.5px; text-align: center; padding: 2px 0 0 2px; overflow: hidden; line-height: 22px; }
.last { border-bottom: 0; }
.last .a, .last .b { border-bottom: 1px solid #a0a0a0; }
.last .c { border-bottom: 1px solid #a0a0a0; line-height: 20px; }
.line .c { border-bottom: 1px solid #000; line-height: 22px; }
.bold .c { font-weight: 700; }

.vscroll { width: 25px; flex: none; box-sizing: border-box; padding: 2px 3px 1px 3px; background: #e6e6e6; display: flex; flex-direction: column; }
.sbtn { height: 18px; background: #fff; border: 1px solid #ababab; display: flex; align-items: center; justify-content: center; flex: none; box-sizing: border-box; }
.thumb { height: 528px; background: #fff; border: 1px solid #ababab; flex: none; box-sizing: border-box; margin-top: 1px; }
.track { flex: 1; background: #d6d6d6; }

/* sheet tabs */
.sheettabs { height: 29px; flex: none; background: #e6e6e6; display: flex; align-items: flex-start; box-sizing: border-box; }
.nav { width: 106px; flex: none; height: 25px; display: flex; align-items: center; gap: 24px; padding-left: 28px; box-sizing: border-box; }
.stabs { display: grid; grid-template-columns: 121px 151px 145px 162px 68px 165px 132px 187px 239px 186px; column-gap: 5px; margin-top: 3px; height: 23px; width: 1601px; flex: none; white-space: nowrap; }
.st { height: 23px; font-size: 16.4px; line-height: 17px; text-align: center; overflow: hidden; color: #222; }
.blue { background: #0070c0; color: #fff; }
.green { background: #00b050; }
.yellow { background: #ffff00; }
.orange { background: #e26b0a; color: #fff; }
.active { background: linear-gradient(#fff, #ffffc8); margin: -3px -3px 0; height: 26px; border-bottom: 2px solid #217346; box-sizing: border-box; color: #217346; font-weight: 700; line-height: 23px; font-size: 16px; }
.more { margin-left: 7px; width: 20px; color: #217346; font-weight: 700; font-size: 14px; line-height: 20px; }
.plus { margin: 3px 0 0 6px; }
.dots.dk { width: 40px; height: 25px; }
.dots.dk i { background: #b5b5b5; width: 2px; }
.hscroll { width: 96px; height: 18px; margin-left: -3px; display: flex; flex: none; margin-top: 5px; }
.hb { width: 19px; background: #fff; border: 1px solid #ababab; box-sizing: border-box; display: flex; align-items: center; justify-content: center; }
.hthumb { width: 20px; background: #fff; }
.htrack { flex: 1; background: #d6d6d6; }

/* status */
.status { height: 27px; flex: none; background: #f3f2f1; display: flex; align-items: center; border-top: 1px solid #d8d8d8; box-sizing: border-box; padding-left: 10px; }
.macro { width: 18px; }
.views { margin-left: 1520px; display: flex; height: 27px; }
.vw { width: 50px; height: 100%; display: flex; align-items: center; justify-content: center; }
.vw.act { background: #c6c6c6; }
.zoom { margin-left: 6px; display: flex; align-items: center; font-size: 12.500px; color: #666; }
.slider { display: block; position: relative; width: 125px; height: 1px; background: #999; margin: 0 6px; }
.slider i { position: absolute; left: 62px; top: -7px; width: 5px; height: 15px; background: #707070; }
.pct { margin-left: 17px; }

/* taskbar */
.taskbar { height: 50px; flex: none; background: #eeeeee; display: flex; align-items: center; position: relative; }
.win { margin-left: 20px; }
.tsearch { margin-left: 20px; width: 429px; flex: none; height: 50px; background: #fff; border: 1px solid #d0d0d0; border-bottom: 0; box-sizing: border-box; display: flex; align-items: center; padding-left: 14px; gap: 15px; font-size: 18px; color: #333; }
.cort { margin-left: 20px; }
.tview { margin-left: 41px; }
.bars { margin-left: 25px; }
.apps { margin-left: 13px; display: flex; height: 50px; flex: none; }
.app-i { width: 62px; height: 50px; display: flex; align-items: center; justify-content: center; box-sizing: border-box; position: relative; }
.app-i::after { content: ""; position: absolute; left: 6px; right: 6px; bottom: 0; height: 3px; background: #e8695a; }
.app-i.x { background: #f7f7f7; }
.app-i.x::after { left: 0; right: 0; }
.tray { margin-left: 444px; display: flex; align-items: center; flex: none; }
.t2 { margin-left: 12px; }
.t3 { margin-left: 14px; }
.t4 { margin-left: 13px; }
.t5 { margin-left: 14px; }
.eng { margin-left: 11px; font-size: 14px; width: 32px; color: #333; }
.clock { width: 90px; margin-left: 1px; display: flex; flex-direction: column; align-items: center; font-size: 14px; line-height: 23px; color: #333; }
.t6 { margin-left: 14px; }
.ic-t { font: 12px "Open Sans", sans-serif; fill: #444; }
.ic-n { font: 11.5px "Open Sans", sans-serif; fill: #444; }
.ic-a { font: 18px "Open Sans", sans-serif; fill: #2b88d8; }
.ic-z { font: 18px "Open Sans", sans-serif; fill: #444; }
.ic-s { font: 700 22px "Open Sans", sans-serif; fill: #fff; text-anchor: middle; }
.ic-b { font: 700 24px "Liberation Sans", sans-serif; fill: #fff; text-anchor: middle; }
.ic-u { font: 700 15px "Open Sans", sans-serif; fill: #fff; text-anchor: middle; }
.ic-x { font: 700 12px "Open Sans", sans-serif; fill: #fff; text-anchor: middle; }
.ic-q { font: 700 22px "Open Sans", sans-serif; fill: #fff; text-anchor: middle; }
.ic-i { font: 700 10px "Open Sans", sans-serif; fill: #fff; text-anchor: middle; }
.ic-50 { font: 700 12px "Liberation Sans", sans-serif; fill: #fff; text-anchor: middle; }
</style>
